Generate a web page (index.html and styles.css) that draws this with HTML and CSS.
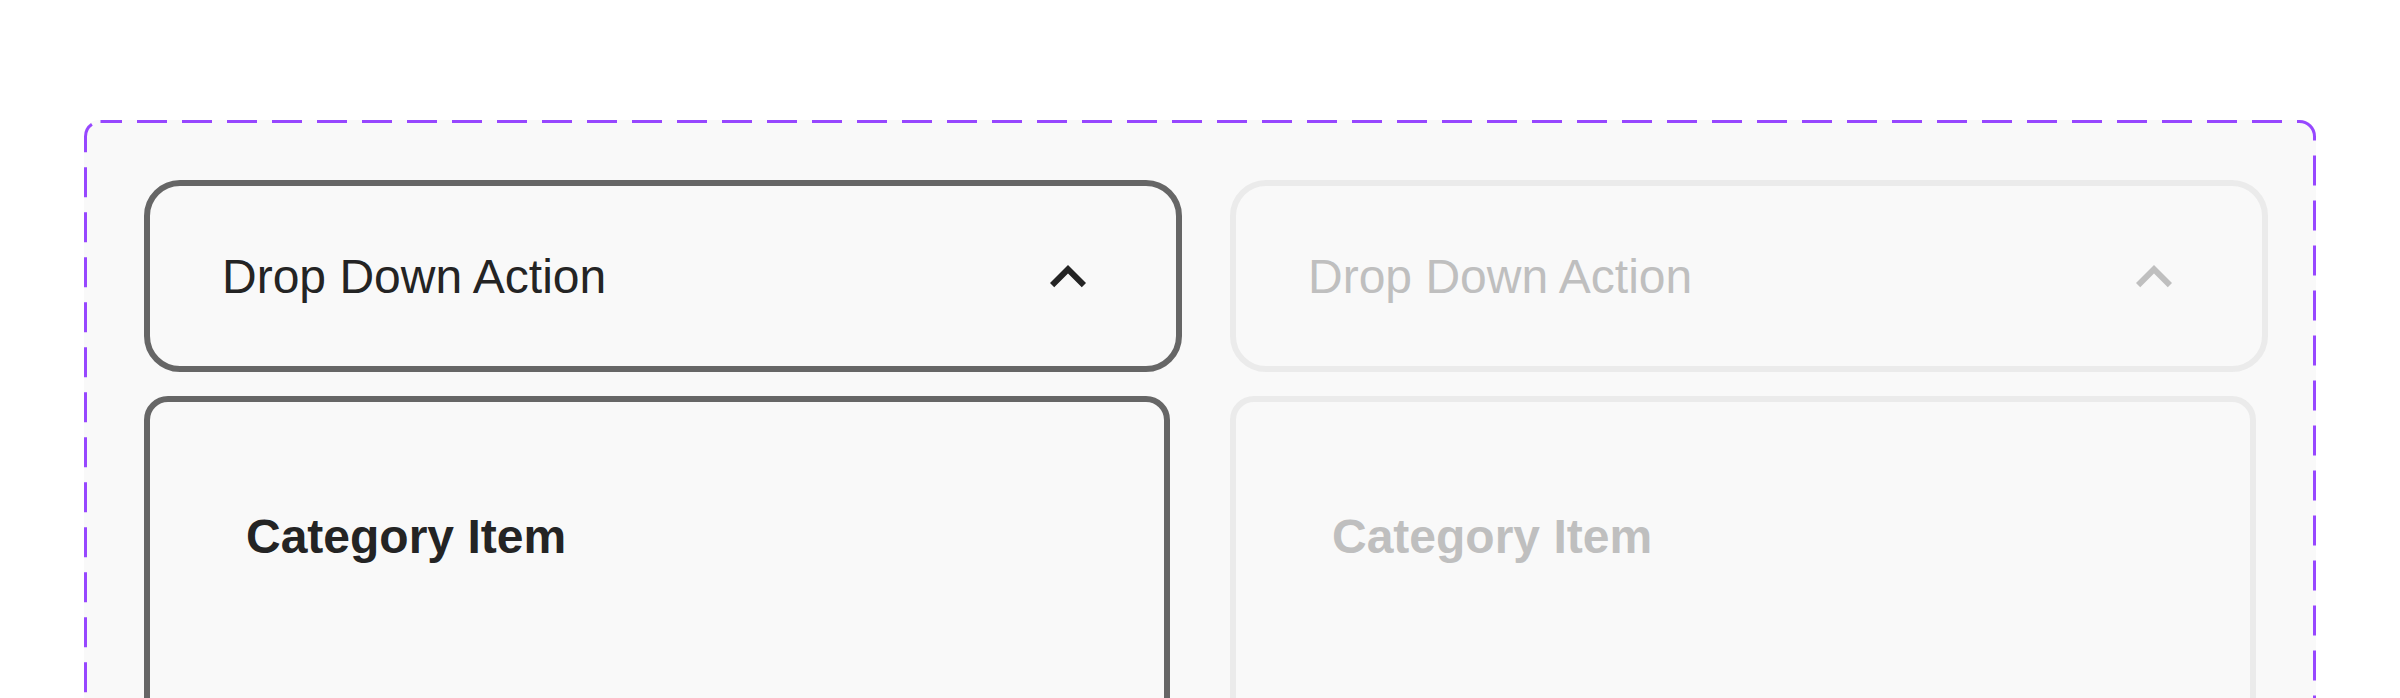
FILE: index.html
```html
<html>
  <head>
    <link rel="stylesheet" href="styles.css">
  </head>

  <body>

    <div class="component-set">
      <svg class="dash-frame" aria-hidden="true">
        <rect class="dash-rect"></rect>
      </svg>

      <div class="variant">
        <div class="dropdown">
          <span class="dropdown-label">Drop Down Action</span>
          <svg class="chevron" viewBox="0 0 24 24">
            <path d="M7.41 15.41L12 10.83l4.59 4.58L18 14l-6-6-6 6z"></path>
          </svg>
        </div>
        <div class="menu">
          <div class="menu-item">Category Item</div>
        </div>
      </div>

      <div class="variant disabled">
        <div class="dropdown">
          <span class="dropdown-label">Drop Down Action</span>
          <svg class="chevron" viewBox="0 0 24 24">
            <path d="M7.41 15.41L12 10.83l4.59 4.58L18 14l-6-6-6 6z"></path>
          </svg>
        </div>
        <div class="menu">
          <div class="menu-item">Category Item</div>
        </div>
      </div>
    </div>

  </body>
</html>
```

FILE: styles.css
```css
body {
  margin: 0;
  padding: 120px 84px 0;
  background: #ffffff;
  font-family: "Liberation Sans", Arial, sans-serif;
  overflow: hidden;
}

.component-set {
  position: relative; /* for the dashed frame overlay */
  display: grid;
  grid-template-columns: 1038px 1038px;
  column-gap: 48px;
  align-items: start;
  padding: 60px;
  min-height: 900px;
  background: #f9f9f9;
  border-radius: 15px;
}

.dash-frame {
  position: absolute;
  top: 0; left: 0;
  width: 100%; height: 100%;
  overflow: visible;
  pointer-events: none;
}
.dash-rect {
  x: 1.5px; y: 1.5px;
  width: calc(100% - 3px);
  height: calc(100% - 3px);
  rx: 15px;
  fill: none;
  stroke: #9747ff;
  stroke-width: 3;
  stroke-dasharray: 30 15;
  stroke-dashoffset: 8.5;
}

.variant {
  display: flex;
  flex-direction: column;
  align-items: flex-start;
  gap: 24px;
}

.dropdown {
  box-sizing: border-box;
  width: 1038px;
  height: 192px;
  display: flex;
  align-items: center;
  justify-content: space-between;
  padding: 2px 72px 0;
  border: 6px solid #666666;
  border-radius: 36px;
  background: #f9f9f9;
}
.dropdown-label {
  font-size: 48px;
  line-height: 72px;
  color: #242424;
}
.chevron {
  width: 72px;
  height: 72px;
  fill: #242424;
}

.menu {
  box-sizing: border-box;
  width: 1026px;
  min-height: 600px;
  padding: 24px;
  border: 6px solid #666666;
  border-radius: 24px;
  background: #f9f9f9;
}
.menu-item {
  padding: 75px 72px;
  font-size: 48px;
  line-height: 72px;
  font-weight: bold;
  color: #242424;
}

/* disabled variant */
.disabled .dropdown,
.disabled .menu {
  border-color: #ebebeb;
}
.disabled .dropdown-label,
.disabled .menu-item {
  color: #bfbfbf;
}
.disabled .chevron {
  fill: #bfbfbf;
}
```
